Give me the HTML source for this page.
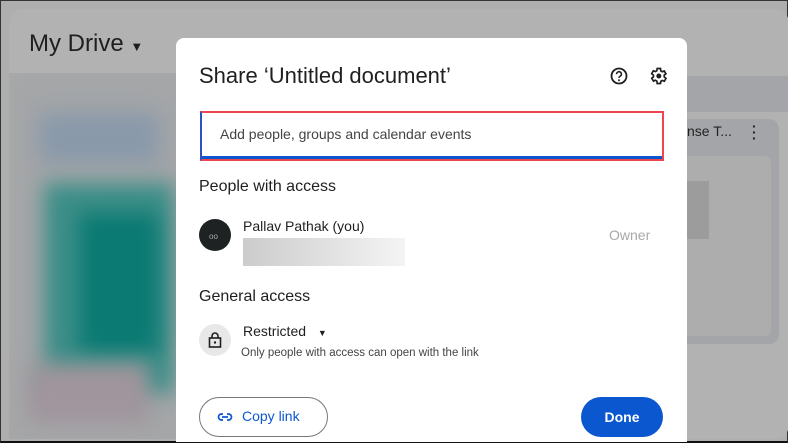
<!DOCTYPE html>
<html><head><style>
*{margin:0;padding:0;box-sizing:border-box}
html{width:788px;height:443px;overflow:hidden}
body{width:788px;height:443px;overflow:hidden;background:#aeaeae;font-family:"Liberation Sans",sans-serif;position:relative;border:1px solid #333;border-bottom:2px solid #111}
.abs{position:absolute}
.blur{filter:blur(10px)}
</style></head><body>
<div class="abs" style="left:8px;top:8px;width:780px;height:430px;background:#b2b2b2;border-radius:14px"></div>
<div class="abs" style="left:28px;top:29px;font-size:24px;color:#1f1f1f">My Drive <span style="font-size:13px">▼</span></div>
<div class="abs" style="left:8px;top:72px;width:168px;height:366px;overflow:hidden">
 <div class="abs blur" style="left:-10px;top:-10px;width:200px;height:390px;background:#a4a6a8"></div>
 <div class="abs blur" style="left:30px;top:40px;width:120px;height:50px;background:#8999aa"></div>
 <div class="abs blur" style="left:35px;top:110px;width:130px;height:210px;background:#3c8e88"></div>
 <div class="abs blur" style="left:70px;top:140px;width:80px;height:140px;background:#0a7a72"></div>
 <div class="abs blur" style="left:20px;top:290px;width:120px;height:60px;background:#a0959c"></div>
</div>
<div class="abs" style="left:686px;top:75px;width:102px;height:36px;background:#a3a5a8"></div>
<div class="abs" style="left:660px;top:118px;width:118px;height:225px;background:#a3a5a8;border-radius:10px"></div>
<div class="abs" style="left:660px;top:155px;width:110px;height:180px;background:#adadad;border-radius:6px"></div>
<div class="abs" style="left:686px;top:122px;font-size:14px;color:#222">nse T...</div>
<div class="abs" style="left:751px;top:122px;font-size:14px;color:#222;line-height:6px;font-weight:bold">·<br>·<br>·</div>
<div class="abs" style="left:686px;top:180px;width:22px;height:58px;background:#9c9c9c"></div>

<div class="abs" style="left:175px;top:37px;width:511px;height:404px;background:#fff;border-radius:8px 8px 0 0">
 <div class="abs" style="left:23px;top:25px;font-size:22px;color:#1f1f1f">Share ‘Untitled document’</div>
 <svg class="abs" style="left:433px;top:28px" width="20" height="20" viewBox="0 0 20 20"><circle cx="10" cy="10" r="7.5" fill="none" stroke="#1f1f1f" stroke-width="1.8"/><path d="M7.6 8.2a2.4 2.4 0 1 1 3.4 2.1c-.7.4-1 .8-1 1.6" fill="none" stroke="#1f1f1f" stroke-width="1.6"/><circle cx="10" cy="14.2" r="1" fill="#1f1f1f"/></svg>
 <svg class="abs" style="left:472px;top:28px" width="20" height="20" viewBox="0 0 24 24"><path d="M19.4 13a7.5 7.5 0 0 0 0-2l2.1-1.6-2-3.5-2.5 1a7 7 0 0 0-1.7-1L15 3h-4l-.4 2.7a7 7 0 0 0-1.7 1l-2.5-1-2 3.5L6.6 11a7.5 7.5 0 0 0 0 2l-2.1 1.6 2 3.5 2.5-1a7 7 0 0 0 1.7 1L11 21h4l.4-2.7a7 7 0 0 0 1.7-1l2.5 1 2-3.5z" fill="none" stroke="#1f1f1f" stroke-width="2"/><circle cx="13" cy="12" r="3" fill="#1f1f1f"/></svg>
 <div class="abs" style="left:24px;top:73px;width:464px;height:50px;border:2px solid #f0444e;border-left-color:#3050c0"></div>
 <div class="abs" style="left:26px;top:118px;width:460px;height:3px;background:#0b57d0"></div>
 <div class="abs" style="left:44px;top:88px;font-size:14px;color:#444">Add people, groups and calendar events</div>
 <div class="abs" style="left:23px;top:140px;font-size:16px;color:#1f1f1f">People with access</div>
 <div class="abs" style="left:23px;top:181px;width:32px;height:32px;border-radius:50%;background:#1e2222"></div>
 <div class="abs" style="left:33px;top:194px;font-size:8px;color:#aaa">oo</div>
 <div class="abs" style="left:67px;top:180px;font-size:14px;color:#1f1f1f">Pallav Pathak (you)</div>
 <div class="abs" style="left:67px;top:200px;width:162px;height:28px;background:linear-gradient(90deg,#ccc,#e8e8e8 70%,#f4f4f4)"></div>
 <div class="abs" style="left:433px;top:189px;font-size:14px;color:#a8a8a8">Owner</div>
 <div class="abs" style="left:23px;top:250px;font-size:16px;color:#1f1f1f">General access</div>
 <div class="abs" style="left:23px;top:286px;width:32px;height:32px;border-radius:50%;background:#e8e8e8"></div>
 <svg class="abs" style="left:31px;top:293px" width="16" height="18" viewBox="0 0 16 18"><rect x="2.5" y="7" width="11" height="9" fill="none" stroke="#1f1f1f" stroke-width="1.6"/><path d="M5 7V5a3 3 0 0 1 6 0v2" fill="none" stroke="#1f1f1f" stroke-width="1.6"/><circle cx="8" cy="11.5" r="1.2" fill="#1f1f1f"/></svg>
 <div class="abs" style="left:67px;top:285px;font-size:14px;color:#1f1f1f">Restricted <span style="font-size:9px;margin-left:8px">▼</span></div>
 <div class="abs" style="left:65px;top:309px;font-size:11.5px;color:#444">Only people with access can open with the link</div>
 <div class="abs" style="left:23px;top:359px;width:129px;height:40px;border:1px solid #777;border-radius:20px"></div>
 <svg class="abs" style="left:41px;top:371px" width="16" height="16" viewBox="0 0 16 16"><path d="M6 5H4.5a3 3 0 0 0 0 6H6M10 5h1.5a3 3 0 0 1 0 6H10M5 8h6" fill="none" stroke="#0b57d0" stroke-width="1.7"/></svg>
 <div class="abs" style="left:66px;top:370px;font-size:14px;color:#0b57d0">Copy link</div>
 <div class="abs" style="left:405px;top:359px;width:82px;height:40px;border-radius:20px;background:#0b57d0;color:#fff;font-size:14px;font-weight:bold;text-align:center;line-height:40px">Done</div>
</div>
</body></html>
